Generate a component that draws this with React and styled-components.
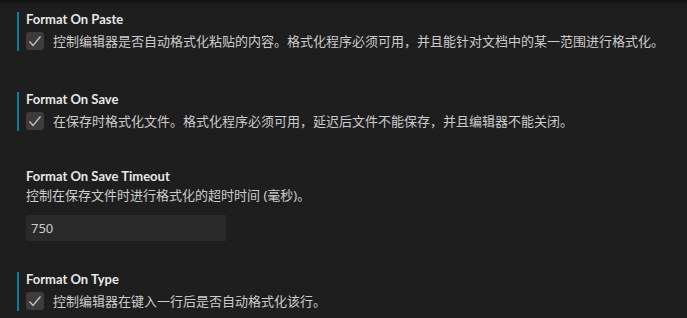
import React from 'react';
import styled, { createGlobalStyle } from 'styled-components';

const GlobalStyle = createGlobalStyle`
  html, body {
    margin: 0;
    padding: 0;
    background: #1e1e1e;
  }
  body {
    font-family: "Segoe UI", "Noto Sans", "Noto Sans CJK SC", sans-serif;
    font-size: 13px;
  }
`;

const settings = [
  {
    key: 'paste',
    title: 'Format On Paste',
    desc: '控制编辑器是否自动格式化粘贴的内容。格式化程序必须可用，并且能针对文档中的某一范围进行格式化。',
    type: 'checkbox',
    modified: true,
    top: 12,
    bottom: 29,
  },
  {
    key: 'save',
    title: 'Format On Save',
    desc: '在保存时格式化文件。格式化程序必须可用，延迟后文件不能保存，并且编辑器不能关闭。',
    type: 'checkbox',
    modified: true,
    top: 12,
    bottom: 26,
  },
  {
    key: 'timeout',
    title: 'Format On Save Timeout',
    desc: '控制在保存文件时进行格式化的超时时间 (毫秒)。',
    type: 'number',
    value: '750',
    modified: false,
    top: 12,
    bottom: 18,
  },
  {
    key: 'type',
    title: 'Format On Type',
    desc: '控制编辑器在键入一行后是否自动格式化该行。',
    type: 'checkbox',
    modified: true,
    top: 12,
    bottom: 20,
  },
];

function CheckIcon() {
  return (
    <svg width="18" height="18" viewBox="0 0 18 18">
      <polyline points="3.5,9.5 7,13.5 14.5,4.5" fill="none" stroke="#c5c5c5" strokeWidth="1.3" />
    </svg>
  );
}

export default function App() {
  return (
    <>
      <GlobalStyle />
      <Editor>
        {settings.map((item) => (
          <Item key={item.key} $top={item.top} $bottom={item.bottom}>
            <Contents $modified={item.modified}>
              {item.type === 'checkbox' ? (
                <>
                  <Title $gap={6}>{item.title}</Title>
                  <CheckRow>
                    <Checkbox><CheckIcon /></Checkbox>
                    <Desc>{item.desc}</Desc>
                  </CheckRow>
                </>
              ) : (
                <>
                  <Title $gap={3}>{item.title}</Title>
                  <Desc>{item.desc}</Desc>
                  <NumberInput>{item.value}</NumberInput>
                </>
              )}
            </Contents>
          </Item>
        ))}
      </Editor>
    </>
  );
}

const Editor = styled.div`
  height: 318px;
  overflow: hidden;
  background: #1e1e1e;
  box-shadow: #000000 0 6px 6px -6px inset;
`;

const Item = styled.div`
  padding: ${(p) => p.$top}px 0 ${(p) => p.$bottom}px 17px;
`;

const Contents = styled.div`
  border-left: 2px solid ${(p) => (p.$modified ? '#0c7d9d' : 'transparent')};
  padding-left: 7px;
  padding-bottom: 1px;
`;

const Title = styled.div`
  color: #e7e7e7;
  font-family: "Lato", "Noto Sans", sans-serif;
  font-weight: 700;
  line-height: 14px;
  margin-bottom: ${(p) => p.$gap}px;
  white-space: nowrap;
`;

const CheckRow = styled.div`
  display: flex;
  align-items: center;
  gap: 9px;
`;

const Checkbox = styled.div`
  width: 18px;
  height: 18px;
  flex: none;
  border-radius: 3px;
  background: #3c3c3c;
  display: flex;
  align-items: center;
  justify-content: center;
`;

const Desc = styled.div`
  color: #cccccc;
  line-height: 18px;
  white-space: nowrap;
`;

const NumberInput = styled.div`
  margin-top: 11px;
  width: 195px;
  height: 26px;
  padding-left: 5px;
  background: #2a2a2a;
  color: #cccccc;
  line-height: 26px;
`;
